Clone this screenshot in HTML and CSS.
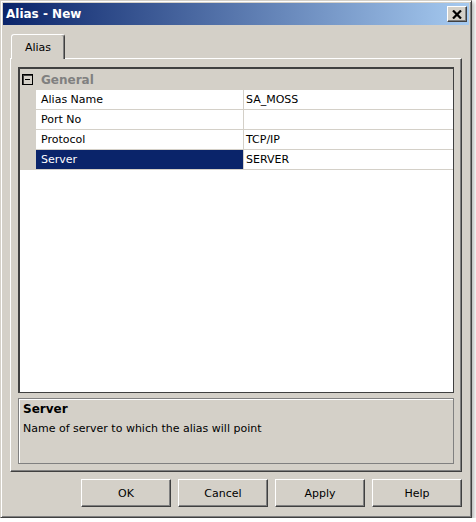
FILE: index.html
```html
<!DOCTYPE html>
<html lang="en">
<head>
    <meta charset="UTF-8">
    <title>Alias - New</title>
    <link rel="stylesheet" href="styles.css">
</head>
<body>
    <div class="window">
        <div class="titlebar">
            <span class="title">Alias - New</span>
            <button class="close" type="button">
                <svg width="10" height="9" viewBox="0 0 10 9">
                    <path d="M1 0.5 L9 8.5 M9 0.5 L1 8.5" stroke="#000" stroke-width="2.2" fill="none"/>
                </svg>
            </button>
        </div>
        <div class="content">
            <div class="tabs">
                <div class="tab">Alias</div>
            </div>
            <div class="panel">
                <div class="grid">
                    <div class="category">
                        <div class="margin"><span class="toggle"></span></div>
                        <div class="cat-name">General</div>
                    </div>
                    <div class="row">
                        <div class="margin"></div>
                        <div class="name">Alias Name</div>
                        <div class="value">SA_MOSS</div>
                    </div>
                    <div class="row">
                        <div class="margin"></div>
                        <div class="name">Port No</div>
                        <div class="value"></div>
                    </div>
                    <div class="row">
                        <div class="margin"></div>
                        <div class="name">Protocol</div>
                        <div class="value">TCP/IP</div>
                    </div>
                    <div class="row">
                        <div class="margin"></div>
                        <div class="name selected">Server</div>
                        <div class="value">SERVER</div>
                    </div>
                </div>
                <div class="desc">
                    <div class="desc-title">Server</div>
                    <div class="desc-text">Name of server to which the alias will point</div>
                </div>
            </div>
            <div class="buttons">
                <button class="btn" type="button">OK</button>
                <button class="btn" type="button">Cancel</button>
                <button class="btn" type="button">Apply</button>
                <button class="btn" type="button">Help</button>
            </div>
        </div>
    </div>
</body>
</html>
```

FILE: styles.css
```css
* {
    margin: 0;
    padding: 0;
    box-sizing: border-box;
}

body {
    font-family: "DejaVu Sans", Verdana, sans-serif;
    font-size: 11px;
    color: #000;
    background: #fff;
}

.window {
    width: 472px;
    height: 518px;
    background: #d4d0c8;
    border: 1px solid;
    border-color: #d4d0c8 #404040 #404040 #d4d0c8;
    box-shadow: inset 1px 1px #fff, inset -1px -1px #808080, 2px 2px 4px rgba(0, 0, 0, 0.3);
    padding: 2px;
    display: flex;
    flex-direction: column;
}

.titlebar {
    height: 22px;
    background: linear-gradient(to right, #0a246a, #a6caf0);
    display: flex;
    align-items: center;
    justify-content: space-between;
    padding: 0 2px 0 3px;
}

.title {
    color: #fff;
    font-weight: bold;
    font-size: 12px;
}

.close {
    width: 20px;
    height: 16px;
    background: #d4d0c8;
    border: 1px solid;
    border-color: #fff #404040 #404040 #fff;
    box-shadow: inset -1px -1px #808080;
    display: flex;
    align-items: center;
    justify-content: center;
}

.content {
    padding: 9px 7px 0 7px;
    display: flex;
    flex-direction: column;
}

.tabs {
    display: flex;
    padding-left: 1px;
}

.tab {
    width: 54px;
    height: 25px;
    margin-bottom: -1px;
    background: #d4d0c8;
    border: 1px solid;
    border-bottom: none;
    border-color: #fff #404040 transparent #fff;
    box-shadow: inset -1px 0 #808080;
    border-radius: 3px 3px 0 0;
    display: flex;
    align-items: center;
    justify-content: center;
    position: relative;
    z-index: 1;
}

.panel {
    width: 452px;
    height: 414px;
    border: 1px solid;
    border-color: #fff #404040 #404040 #fff;
    box-shadow: inset -1px -1px #808080;
    padding: 8px 7px 7px 7px;
    display: flex;
    flex-direction: column;
}

.grid {
    width: 436px;
    height: 327px;
    background: #fff;
    border: 1px solid #404040;
    box-shadow: inset 1px 1px #404040;
}

.category {
    height: 21px;
    margin-top: 1px;
    margin-left: 1px;
    background: #d4d0c8;
    display: flex;
}

.margin {
    width: 16px;
    background: #d4d0c8;
    display: flex;
    align-items: center;
    padding-left: 2px;
}

.toggle {
    width: 11px;
    height: 11px;
    border: 1px solid #000;
    box-shadow: inset 1px 1px #404040;
    background: #d4d0c8;
    position: relative;
}

.toggle::after {
    content: "";
    position: absolute;
    left: 2px;
    right: 2px;
    top: 4px;
    height: 1px;
    background: #000;
}

.cat-name {
    padding-left: 5px;
    font-weight: bold;
    font-size: 12px;
    color: #808080;
    display: flex;
    align-items: center;
}

.row {
    height: 20px;
    margin-left: 1px;
    display: flex;
}

.name {
    width: 208px;
    padding-left: 5px;
    border-bottom: 1px solid #d4d0c8;
    border-right: 1px solid #d4d0c8;
    display: flex;
    align-items: center;
}

.name.selected {
    background: #0a246a;
    color: #fff;
}

.value {
    flex: 1;
    padding-left: 2px;
    border-bottom: 1px solid #d4d0c8;
    display: flex;
    align-items: center;
}

.desc {
    margin-top: 5px;
    height: 66px;
    border: 1px solid #808080;
    box-shadow: inset 1px 1px #fff;
    padding: 3px 4px;
}

.desc-title {
    font-weight: bold;
    font-size: 12px;
    line-height: 15px;
}

.desc-text {
    margin-top: 5px;
    line-height: 14px;
}

.buttons {
    margin-top: 7px;
    display: flex;
    justify-content: flex-end;
    gap: 7px;
}

.btn {
    width: 90px;
    height: 28px;
    background: #d4d0c8;
    border: 1px solid;
    border-color: #fff #404040 #404040 #fff;
    box-shadow: inset -1px -1px #808080;
    font-family: "DejaVu Sans", Verdana, sans-serif;
    font-size: 11px;
    color: #000;
}
```
